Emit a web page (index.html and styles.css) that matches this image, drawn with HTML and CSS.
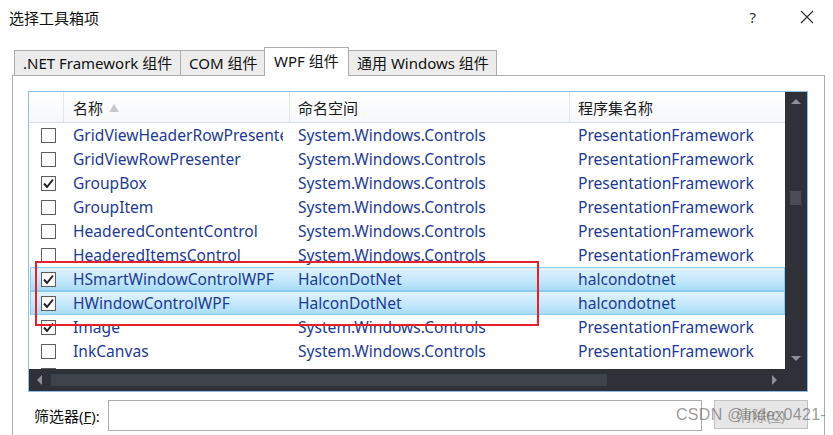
FILE: index.html
```html
<!DOCTYPE html>
<html lang="zh-CN">
<head>
    <meta charset="UTF-8">
    <title>选择工具箱项</title>
    <link rel="stylesheet" href="styles.css">
</head>
<body>
    <div class="titlebar">
        <div class="title">选择工具箱项</div>
        <div class="title-buttons">
            <span class="help">?</span>
            <svg class="close" width="14" height="14" viewBox="0 0 14 14">
                <path d="M1 1 L13 13 M13 1 L1 13" stroke="#333" stroke-width="1.2" fill="none"/>
            </svg>
        </div>
    </div>

    <div class="tabs">
        <div class="tab tab-net">.NET Framework 组件</div>
        <div class="tab tab-com">COM 组件</div>
        <div class="tab tab-wpf active">WPF 组件</div>
        <div class="tab tab-win">通用 Windows 组件</div>
    </div>

    <div class="panel">
        <div class="list">
            <div class="view">
                <div class="row header">
                    <div class="cell chk"></div>
                    <div class="cell name">名称 <span class="sort">&#9650;</span></div>
                    <div class="cell ns">命名空间</div>
                    <div class="cell asm">程序集名称</div>
                </div>
                <div id="rows"></div>
            </div>
            <div class="vscroll">
                <span class="arrow up"></span>
                <span class="vthumb"></span>
                <span class="arrow down"></span>
            </div>
            <div class="hscroll">
                <span class="arrow left"></span>
                <span class="hthumb"></span>
                <span class="arrow right"></span>
            </div>
            <div class="corner"></div>
        </div>

        <div class="filter">
            <label class="filter-label">筛选器(<u>F</u>):</label>
            <div class="filter-input"></div>
            <button class="clear" disabled>清除(<u>C</u>)</button>
        </div>

        <div class="highlight"></div>
        <div class="watermark">CSDN @index0421-</div>
    </div>

    <script>
        const items = [
            ['GridViewHeaderRowPresenter', 'System.Windows.Controls', 'PresentationFramework', false, false],
            ['GridViewRowPresenter', 'System.Windows.Controls', 'PresentationFramework', false, false],
            ['GroupBox', 'System.Windows.Controls', 'PresentationFramework', true, false],
            ['GroupItem', 'System.Windows.Controls', 'PresentationFramework', false, false],
            ['HeaderedContentControl', 'System.Windows.Controls', 'PresentationFramework', false, false],
            ['HeaderedItemsControl', 'System.Windows.Controls', 'PresentationFramework', false, false],
            ['HSmartWindowControlWPF', 'HalconDotNet', 'halcondotnet', true, true],
            ['HWindowControlWPF', 'HalconDotNet', 'halcondotnet', true, true],
            ['Image', 'System.Windows.Controls', 'PresentationFramework', true, false],
            ['InkCanvas', 'System.Windows.Controls', 'PresentationFramework', false, false],
            ['InkPresenter', 'System.Windows.Controls', 'PresentationFramework', false, false]
        ];

        const check = '<svg width="13" height="13" viewBox="0 0 13 13"><path d="M2 6.5 L5 10 L11 2.5" stroke="#222" stroke-width="2" fill="none"/></svg>';

        let html = '';
        items.forEach(function (it) {
            html += '<div class="row item' + (it[4] ? ' selected' : '') + '">' +
                '<div class="cell chk"><span class="box">' + (it[3] ? check : '') + '</span></div>' +
                '<div class="cell name">' + it[0] + '</div>' +
                '<div class="cell ns">' + it[1] + '</div>' +
                '<div class="cell asm">' + it[2] + '</div>' +
                '</div>';
        });
        document.getElementById('rows').innerHTML = html;
    </script>
</body>
</html>
```

FILE: styles.css
```css
body {
    margin: 0;
    background-color: #fff;
    color: #1a1a1a;
    font-family: 'Noto Sans', 'Noto Sans CJK SC', sans-serif;
    font-size: 14px;
    width: 833px;
    height: 435px;
    overflow: hidden;
}

.titlebar {
    height: 34px;
    display: flex;
    justify-content: space-between;
    align-items: center;
}
.title {
    margin-left: 9px;
    font-size: 15px;
    color: #111;
}
.title-buttons {
    display: flex;
    align-items: center;
    margin-right: 19px;
}
.help {
    font-size: 15px;
    color: #333;
    margin-right: 44px;
}

.tabs {
    display: flex;
    align-items: flex-end;
    margin-top: 13px;
    padding-left: 14px;
    height: 28px;
    position: relative;
    z-index: 2;
}
.tab {
    box-sizing: border-box;
    height: 25px;
    border: 1px solid #adadad;
    border-bottom: none;
    background-color: #ececec;
    font-size: 15px;
    line-height: 24px;
    padding-left: 8px;
    color: #111;
    margin-right: -1px;
}
.tab-net { width: 167px; }
.tab-com { width: 85px; }
.tab-wpf { width: 85px; }
.tab-win { width: 149px; }
.tab.active {
    height: 29px;
    background-color: #fff;
    line-height: 27px;
    padding-left: 9px;
    margin-bottom: -1px;
}

.panel {
    position: relative;
    margin-left: 12px;
    width: 813px;
    box-sizing: border-box;
    height: 362px;
    border: 1px solid #adadad;
    border-bottom: none;
    padding: 15px 16px 0 15px;
}

.list {
    display: grid;
    grid-template-columns: 756px 22px;
    grid-template-rows: 277px 22px;
    border: 1px solid #8fbde3;
    width: 780px;
    box-sizing: border-box;
}
.view {
    overflow: hidden;
}
.row {
    display: flex;
    height: 24px;
    align-items: center;
}
.cell {
    white-space: nowrap;
    overflow: hidden;
    box-sizing: border-box;
}
.chk { width: 35px; flex: none; }
.name { width: 219px; margin-right: 7px; flex: none; padding-left: 9px; }
.ns { width: 280px; flex: none; padding-left: 8px; }
.asm { width: 215px; flex: none; padding-left: 8px; }

.header {
    height: 30px;
    border-bottom: 1px solid #d9dde3;
    background: linear-gradient(#fff, #f7f8fa);
    color: #1a1a1a;
    font-size: 15px;
}
.header .cell {
    height: 30px;
    line-height: 33px;
    border-right: 1px solid #e3e6ea;
}
.header .name {
    width: 226px;
    margin-right: 0;
}
.header .asm { border-right: none; }
.sort {
    color: #c8c8c8;
    font-size: 10px;
    vertical-align: 2px;
    margin-left: 2px;
}

.item {
    color: #1d3a93;
    font-size: 15.6px;
}
.item.selected {
    background: linear-gradient(#e4f4fd, #c9eafb 45%, #a6dbf6);
    box-shadow: inset 0 0 0 1px #8ccbf0;
    margin-left: 1px;
}
.item.selected .chk { width: 34px; }
.box {
    display: flex;
    width: 15px;
    height: 15px;
    box-sizing: border-box;
    border: 1px solid #5e5e5e;
    background-color: #fff;
    margin-left: 12px;
    align-items: center;
    justify-content: center;
}
.item.selected .box { margin-left: 11px; }

.vscroll, .hscroll, .corner {
    background-color: #2e3138;
    position: relative;
}
.vscroll {
    grid-row: 1;
    grid-column: 2;
}
.hscroll {
    grid-row: 2;
    grid-column: 1;
}
.arrow {
    position: absolute;
    width: 0;
    height: 0;
}
.arrow.up {
    top: 7px;
    left: 6px;
    border-left: 5px solid transparent;
    border-right: 5px solid transparent;
    border-bottom: 5px solid #8c8f94;
}
.arrow.down {
    bottom: 8px;
    left: 6px;
    border-left: 5px solid transparent;
    border-right: 5px solid transparent;
    border-top: 5px solid #8c8f94;
}
.arrow.left {
    left: 8px;
    top: 6px;
    border-top: 5px solid transparent;
    border-bottom: 5px solid transparent;
    border-right: 5px solid #8c8f94;
}
.arrow.right {
    right: 8px;
    top: 6px;
    border-top: 5px solid transparent;
    border-bottom: 5px solid transparent;
    border-left: 5px solid #8c8f94;
}
.vthumb {
    position: absolute;
    left: 5px;
    top: 99px;
    width: 11px;
    height: 14px;
    background-color: #4a4d55;
}
.hthumb {
    position: absolute;
    left: 22px;
    top: 5px;
    width: 556px;
    height: 12px;
    background-color: #3f434a;
}

.filter {
    display: flex;
    align-items: center;
    margin-top: 8px;
    height: 31px;
}
.filter-label {
    font-size: 15px;
    color: #111;
    margin-left: 6px;
    width: 74px;
}
.filter-input {
    width: 595px;
    height: 31px;
    box-sizing: border-box;
    border: 1px solid #adadad;
    background-color: #fff;
}
.clear {
    margin-left: 12px;
    width: 94px;
    height: 29px;
    box-sizing: border-box;
    border: 1px solid #c2c2c2;
    background-color: #e6e6e6;
    color: #a2a2a2;
    font-family: 'Noto Sans', 'Noto Sans CJK SC', sans-serif;
    font-size: 15px;
    padding: 0;
    margin-top: -2px;
}

.highlight {
    position: absolute;
    left: 22px;
    top: 185px;
    width: 504px;
    height: 65px;
    box-sizing: border-box;
    border: 2px solid #e5212b;
}
.watermark {
    position: absolute;
    left: 663px;
    top: 330px;
    white-space: nowrap;
    font-family: 'Liberation Sans', sans-serif;
    font-size: 16px;
    color: rgba(110, 110, 110, 0.7);
    letter-spacing: 0.3px;
}
```
